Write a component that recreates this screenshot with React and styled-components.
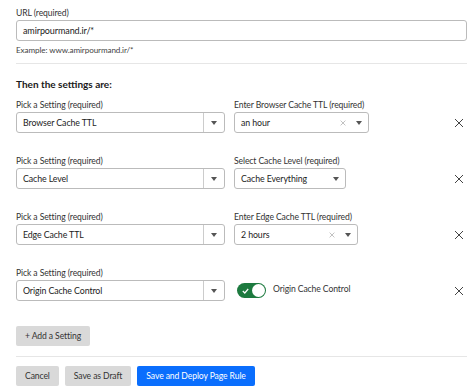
import React from 'react'
import styled, { createGlobalStyle } from 'styled-components'

const GlobalStyle = createGlobalStyle`
  body {
    margin: 0;
    background: #fff;
    font-family: Lato, "Open Sans", sans-serif;
    color: #333;
  }
`

const settings = [
  { name: 'Browser Cache TTL', kind: 'select', label: 'Enter Browser Cache TTL (required)', value: 'an hour', clearable: true, width: 135 },
  { name: 'Cache Level', kind: 'select', label: 'Select Cache Level (required)', value: 'Cache Everything', width: 112 },
  { name: 'Edge Cache TTL', kind: 'select', label: 'Enter Edge Cache TTL (required)', value: '2 hours', clearable: true, width: 124 },
  { name: 'Origin Cache Control', kind: 'toggle', value: 'Origin Cache Control' },
]

const Arrow = () => (
  <svg width="6" height="4" viewBox="0 0 6 4"><path d="M0 0h6L3 4z" fill="#555" /></svg>
)

const CloseIcon = ({ size = 11, color = '#444', stroke = 1 }) => (
  <svg width={size} height={size} viewBox="0 0 10 10">
    <path d="M1 1l8 8M9 1l-8 8" stroke={color} strokeWidth={stroke} fill="none" />
  </svg>
)

const Check = () => (
  <svg width="7" height="6" viewBox="0 0 7 6"><path d="M0.8 3l2 2L6.2 1" stroke="#fff" strokeWidth="1.2" fill="none" /></svg>
)

const App = () => {
  return (
    <>
      <GlobalStyle />
      <Page>
        <Label>URL (required)</Label>
        <TextInput>amirpourmand.ir/*</TextInput>
        <Hint>Example: www.amirpourmand.ir/*</Hint>
        <Divider $top={7} />
        <Heading>Then the settings are:</Heading>

        {settings.map((s) => (
          <SettingRow key={s.name}>
            <Column $width={209}>
              <Label>Pick a Setting (required)</Label>
              <SelectBox>
                <SelectValue>{s.name}</SelectValue>
                <ArrowCell><Arrow /></ArrowCell>
              </SelectBox>
            </Column>
            <Column $width={s.kind === 'select' ? s.width : 200}>
              {s.kind === 'select' ? (
                <>
                  <Label>{s.label}</Label>
                  <SmallSelect>
                    <SelectValue>{s.value}</SelectValue>
                    {s.clearable && <Clear><CloseIcon size={6} color="#999" stroke={1} /></Clear>}
                    <Arrow />
                  </SmallSelect>
                </>
              ) : (
                <ToggleRow>
                  <Toggle>
                    <Check />
                    <Knob />
                  </Toggle>
                  <ToggleText>{s.value}</ToggleText>
                </ToggleRow>
              )}
            </Column>
            <Remove><CloseIcon size={10} /></Remove>
          </SettingRow>
        ))}

        <Button>+ Add a Setting</Button>
        <Divider $top={10} />
        <Actions>
          <Button>Cancel</Button>
          <Button>Save as Draft</Button>
          <Button $primary>Save and Deploy Page Rule</Button>
        </Actions>
      </Page>
    </>
  )
}

export default App

const Page = styled.div`
  width: 451px;
  padding: 7px 7px 0 16px;
  letter-spacing: -0.1px;
`

const Label = styled.div`
  font-size: 8.6px;
  line-height: 12px;
  color: #333;
  margin-bottom: 1px;
  white-space: nowrap;
`

const TextInput = styled.div`
  height: 21px;
  box-sizing: border-box;
  border: 1px solid #bbb;
  border-radius: 3px;
  padding: 0 6px;
  font-size: 9px;
  line-height: 19px;
  color: #222;
`

const Hint = styled.div`
  font-size: 8.1px;
  line-height: 12px;
  color: #444;
  margin-top: 3px;
`

const Divider = styled.div`
  height: 1px;
  background: #e6e6e6;
  margin-top: ${(p) => p.$top}px;
`

const Heading = styled.div`
  font-size: 10px;
  font-weight: 700;
  color: #1a1a1a;
  line-height: 14px;
  margin: 13px 0 8px;
  letter-spacing: 0;
`

const SettingRow = styled.div`
  display: flex;
  align-items: flex-end;
  gap: 9px;
  margin-bottom: 22px;
  &:last-of-type { margin-bottom: 20px; }
`

const Column = styled.div`
  width: ${(p) => p.$width}px;
  flex: none;
`

const SelectBox = styled.div`
  height: 21px;
  box-sizing: border-box;
  border: 1px solid #bbb;
  border-radius: 3px;
  display: flex;
  align-items: center;
  padding-left: 6px;
`

const SelectValue = styled.div`
  flex: 1;
  font-size: 8.8px;
  color: #222;
  white-space: nowrap;
`

const ArrowCell = styled.div`
  width: 20px;
  height: 100%;
  border-left: 1px solid #ccc;
  display: flex;
  align-items: center;
  justify-content: center;
`

const SmallSelect = styled.div`
  height: 21px;
  box-sizing: border-box;
  border: 1px solid #bbb;
  border-radius: 3px;
  display: flex;
  align-items: center;
  padding: 0 6px;
  gap: 10px;
`

const Clear = styled.div`
  display: flex;
  align-items: center;
`

const ToggleRow = styled.div`
  height: 21px;
  display: flex;
  align-items: center;
  gap: 7px;
  padding-left: 3px;
`

const Toggle = styled.div`
  width: 29px;
  height: 15px;
  box-sizing: border-box;
  border-radius: 8px;
  background: #1d7a3f;
  display: flex;
  align-items: center;
  justify-content: space-between;
  padding: 0 1px 0 5px;
`

const Knob = styled.div`
  width: 13px;
  height: 13px;
  border-radius: 50%;
  background: #fff;
`

const ToggleText = styled.div`
  font-size: 8.6px;
  color: #333;
  margin-top: -4px;
`

const Remove = styled.div`
  margin-left: auto;
  height: 21px;
  width: 17px;
  display: flex;
  align-items: center;
  justify-content: center;
`

const Button = styled.div`
  display: inline-flex;
  align-items: center;
  height: 20px;
  padding: 0 9px;
  border-radius: 2px;
  font-size: 8.6px;
  background: ${(p) => (p.$primary ? '#0a6efd' : '#d9d9d9')};
  color: ${(p) => (p.$primary ? '#fff' : '#333')};
`

const Actions = styled.div`
  display: flex;
  gap: 6px;
  margin-top: 9px;
`
